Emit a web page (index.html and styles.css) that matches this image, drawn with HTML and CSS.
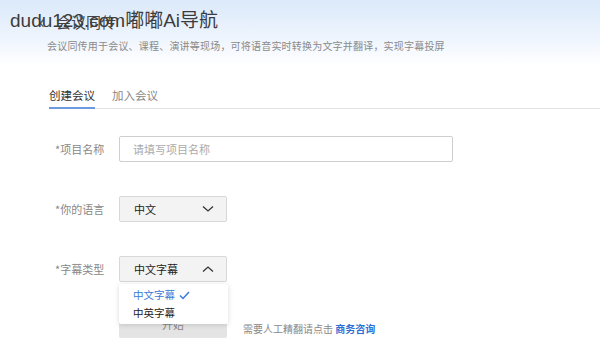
FILE: index.html
```html
<!DOCTYPE html>
<html lang="zh">
<head>
    <meta charset="UTF-8">
    <meta name="viewport" content="width=device-width, initial-scale=1.0">
    <title>会议同传</title>
    <link rel="stylesheet" href="styles.css">
</head>
<body>
    <div class="header">
        <div class="title-row">
            <span class="back">&lsaquo;</span>
            <span class="title">会议同传</span>
            <div class="watermark">dudu123.com嘟嘟Ai导航</div>
        </div>
        <p class="desc">会议同传用于会议、课程、演讲等现场，可将语音实时转换为文字并翻译，实现字幕投屏</p>
    </div>

    <div class="container">
        <div class="tabs">
            <div class="tab active">创建会议</div>
            <div class="tab">加入会议</div>
        </div>

        <div class="form">
            <div class="row">
                <label class="label">*项目名称</label>
                <input class="input" type="text" placeholder="请填写项目名称">
            </div>

            <div class="row">
                <label class="label">*你的语言</label>
                <div class="select">
                    <span>中文</span>
                    <svg width="12" height="8" viewBox="0 0 12 8"><path d="M1 1.5 L6 6 L11 1.5" fill="none" stroke="#333" stroke-width="1.3"/></svg>
                </div>
            </div>

            <div class="row">
                <label class="label">*字幕类型</label>
                <div class="select-wrap">
                    <div class="select">
                        <span>中文字幕</span>
                        <svg width="12" height="8" viewBox="0 0 12 8"><path d="M1 6.5 L6 2 L11 6.5" fill="none" stroke="#333" stroke-width="1.3"/></svg>
                    </div>
                    <ul class="menu">
                        <li class="selected">中文字幕
                            <svg width="11" height="9" viewBox="0 0 11 9"><path d="M1 4.5 L4 7.5 L10 1" fill="none" stroke="#3a7bd5" stroke-width="1.5"/></svg>
                        </li>
                        <li>中英字幕</li>
                    </ul>
                </div>
            </div>

            <div class="row submit-row">
                <button class="btn">开始</button>
                <span class="hint">需要人工精翻请点击 <a href="#" class="link">商务咨询</a></span>
            </div>
        </div>
    </div>
</body>
</html>
```

FILE: styles.css
```css
* {
    box-sizing: border-box;
}
body {
    margin: 0;
    font-family: "Noto Sans CJK SC", "Noto Sans", sans-serif;
    color: #333;
    background: #fff;
    height: 360px;
    overflow: hidden;
}
.header {
    background: linear-gradient(to bottom, #dbe9fa 0%, #edf4fd 55%, #ffffff 100%);
    padding: 8px 0 8px 47px;
    height: 66px;
}
.title-row {
    position: relative;
    display: flex;
    align-items: center;
    gap: 11px;
    height: 26px;
    margin-left: -8px;
}
.back {
    font-size: 20px;
    color: #555;
    line-height: 1;
}
.title {
    font-size: 15px;
    color: #444;
}
.watermark {
    position: absolute;
    left: -29px;
    top: 0;
    font-family: "Liberation Sans", "Noto Sans CJK SC", sans-serif;
    font-size: 19px;
    color: #3c3c3c;
    white-space: nowrap;
    line-height: 26px;
}
.desc {
    margin: 4px 0 0;
    font-size: 10px;
    letter-spacing: 0.2px;
    color: #8a8a8a;
}
.container {
    padding: 14px 0 0 49px;
}
.tabs {
    display: flex;
    gap: 17px;
    border-bottom: 1px solid #e3e3e3;
    height: 29px;
}
.tab {
    font-size: 11.5px;
    color: #888;
    line-height: 26px;
    padding-top: 2px;
}
.tab.active {
    color: #333;
    border-bottom: 2px solid #6d9be0;
    margin-bottom: -1px;
}
.form {
    padding-top: 27px;
    display: flex;
    flex-direction: column;
    gap: 34px;
}
.row {
    display: flex;
    align-items: center;
    height: 26px;
}
.label {
    width: 70px;
    padding-left: 6px;
    font-size: 11px;
    color: #888;
}
.input {
    width: 334px;
    height: 26px;
    border: 1px solid #cfcfcf;
    border-radius: 2px;
    padding: 0 13px;
    font-family: inherit;
    font-size: 11px;
    outline: none;
}
.input::placeholder {
    color: #aaa;
}
.select-wrap {
    position: relative;
}
.select {
    width: 108px;
    height: 26px;
    background: #f3f3f3;
    border: 1px solid #d8d8d8;
    border-radius: 2px;
    display: flex;
    align-items: center;
    justify-content: space-between;
    padding: 0 12px 0 14px;
    font-size: 11px;
    color: #222;
}
.menu {
    position: absolute;
    top: 28px;
    left: 0;
    width: 109px;
    margin: 0;
    padding: 2px 0;
    list-style: none;
    background: #fff;
    box-shadow: 0 1px 5px rgba(0, 0, 0, 0.15);
    border-radius: 2px;
    z-index: 2;
}
.menu li {
    font-size: 10.5px;
    height: 18px;
    line-height: 18px;
    padding-left: 14px;
    color: #222;
    display: flex;
    align-items: center;
    gap: 4px;
}
.menu li.selected {
    color: #3a7bd5;
}
.submit-row {
    padding-left: 70px;
    margin-top: -2px;
    gap: 16px;
}
.btn {
    width: 108px;
    height: 27px;
    border: none;
    background: #e4e4e4;
    border-radius: 2px;
    color: #888;
    font-family: inherit;
    font-size: 11px;
    margin-top: -6px;
}
.hint {
    font-size: 10px;
    color: #888;
    margin-top: 2px;
}
.link {
    color: #2f6fd3;
    font-weight: bold;
    text-decoration: none;
}
```
